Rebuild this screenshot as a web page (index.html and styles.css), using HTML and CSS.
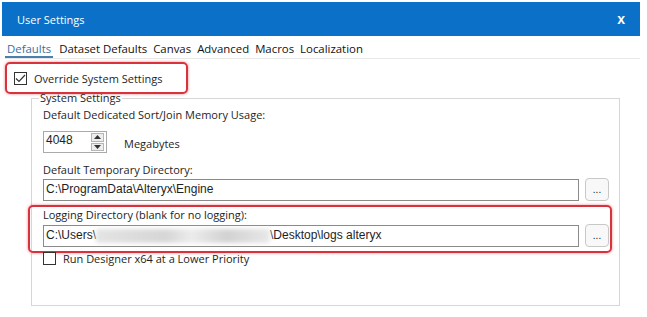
FILE: index.html
```html
<!DOCTYPE html>
<html lang="en">
<head>
  <meta charset="UTF-8" />
  <title>User Settings</title>
  <link rel="stylesheet" href="styles.css">
</head>
<body>
  <div class="dialog">
    <header class="titlebar">
      <span class="title">User Settings</span>
      <span class="close">x</span>
    </header>
    <nav class="tabs">
      <span class="tab active">Defaults</span>
      <span class="tab">Dataset Defaults</span>
      <span class="tab">Canvas</span>
      <span class="tab">Advanced</span>
      <span class="tab">Macros</span>
      <span class="tab">Localization</span>
    </nav>
    <div class="content">
      <!-- highlighted override checkbox -->
      <div class="highlight override">
        <label class="check">
          <span class="box checked">
            <svg width="11" height="9" viewBox="0 0 11 9"><path d="M1 4.5 L4 7.5 L10 1" fill="none" stroke="#333" stroke-width="1.2"/></svg>
          </span>
          Override System Settings
        </label>
      </div>
      <fieldset class="group">
        <legend>System Settings</legend>
        <div class="field-label">Default Dedicated Sort/Join Memory Usage:</div>
        <div class="number-row">
          <div class="spin">
            <span class="spin-value">4048</span>
            <span class="spin-buttons">
              <span class="spin-btn"><svg width="7" height="4" viewBox="0 0 7 4"><path d="M0 4 L3.5 0 L7 4Z" fill="#333"/></svg></span>
              <span class="spin-btn"><svg width="7" height="4" viewBox="0 0 7 4"><path d="M0 0 L3.5 4 L7 0Z" fill="#333"/></svg></span>
            </span>
          </div>
          <span class="unit">Megabytes</span>
        </div>
        <div class="field-label temp">Default Temporary Directory:</div>
        <div class="path-row">
          <div class="path-input">C:\ProgramData\Alteryx\Engine</div>
          <button class="browse">...</button>
        </div>
        <!-- highlighted logging directory -->
        <div class="highlight logging">
          <div class="field-label">Logging Directory (blank for no logging):</div>
          <div class="path-row">
            <div class="path-input">C:\Users\<span class="blur"></span>\Desktop\logs alteryx</div>
            <button class="browse">...</button>
          </div>
        </div>
        <label class="check low">
          <span class="box"></span>
          Run Designer x64 at a Lower Priority
        </label>
      </fieldset>
    </div>
  </div>
</body>
</html>
```

FILE: styles.css
```css
body {
  margin: 0;
  background-color: #fff;
  font-family: "Open Sans", "Noto Sans", sans-serif;
  font-size: 11px;
  color: #1e1e1e;
}
.dialog {
  width: 647px;
  height: 317px;
  background-color: #fff;
}
.titlebar {
  display: flex;
  align-items: center;
  justify-content: space-between;
  height: 34px;
  margin: 2px 7px 0 2px;
  padding: 0 15px 0 15px;
  background-color: #0b71c8;
  color: #fff;
}
.title {
  font-size: 11px;
}
.close {
  font-family: "Liberation Sans", Arial, sans-serif;
  font-weight: bold;
  font-size: 14px;
}
.tabs {
  display: flex;
  gap: 6px;
  margin: 5px 7px 0 5px;
  padding-left: 2px;
  border-bottom: 1px solid #e8e8e8;
  height: 17px;
  font-size: 11.4px;
}
.tab {
  line-height: 16px;
  color: #111;
}
.tab.active {
  color: #3a6f9c;
  border-bottom: 2px solid #4a7fae;
  margin-left: -2px;
  padding: 0 2px;
  height: 15px;
}
.content {
  position: relative;
}
.highlight {
  border: 2px solid #d8333c;
  border-radius: 5px;
  box-shadow: 0 0 3px rgba(216, 51, 60, 0.6);
}
.override {
  width: 179px;
  height: 28px;
  margin: 3px 0 0 5px;
  display: flex;
  align-items: center;
}
.check {
  display: flex;
  align-items: center;
  gap: 7px;
  font-size: 11px;
}
.override .check {
  margin-left: 7px;
}
.box {
  width: 11px;
  height: 11px;
  border: 1px solid #333;
  background-color: #fff;
  display: flex;
  align-items: center;
  justify-content: center;
}
.group {
  margin: -1px 27px 0 31px;
  padding: 0 0 0 11px;
  height: 213px;
  box-sizing: border-box;
  border: 1px solid #d6d6d6;
}
.group legend {
  padding: 0 1px;
  margin-left: -4px;
  line-height: 10px;
  font-size: 11px;
  color: #1e1e1e;
}
.field-label {
  font-size: 11px;
  margin-top: 4px;
  line-height: 16px;
}
.number-row {
  display: flex;
  align-items: center;
  margin-top: 8px;
  gap: 17px;
}
.spin {
  display: flex;
  justify-content: space-between;
  width: 64px;
  height: 22px;
  box-sizing: border-box;
  border: 1px solid #aaa;
  padding: 1px 2px 1px 2px;
}
.spin-value {
  font-family: "Liberation Sans", Arial, sans-serif;
  font-size: 12px;
  line-height: 14px;
}
.spin-buttons {
  display: flex;
  flex-direction: column;
  gap: 1px;
}
.spin-btn {
  width: 11px;
  height: 8px;
  border: 1px solid #b5b5b5;
  background-color: #eee;
  display: flex;
  align-items: center;
  justify-content: center;
}
.unit {
  font-size: 11px;
  margin-top: 3px;
}
.field-label.temp {
  margin-top: 9px;
}
.path-row {
  display: flex;
  align-items: center;
  gap: 6px;
}
.path-input {
  width: 536px;
  height: 22px;
  box-sizing: border-box;
  border: 1px solid #8a8a8a;
  padding: 0 2px;
  font-family: "Liberation Sans", Arial, sans-serif;
  font-size: 12px;
  line-height: 19px;
  display: flex;
  align-items: center;
  white-space: pre;
}
.blur {
  display: inline-block;
  width: 174px;
  height: 14px;
  background: linear-gradient(90deg, #e4e4e4, #d6d6d6 40%, #ececec 55%, #d2d2d2 75%, #e8e8e8);
  filter: blur(2px);
}
.browse {
  width: 24px;
  height: 23px;
  border: 1px solid #c8c8c8;
  border-radius: 4px;
  background-color: #f8f8f8;
  font-family: "Liberation Sans", Arial, sans-serif;
  font-size: 10px;
  color: #222;
  padding: 0;
}
.logging {
  margin: 4px 0 0 -15px;
  padding: 0 0 4px 13px;
  width: 567px;
}
.logging .field-label {
  margin-top: 0;
}
.logging .path-row {
  margin-top: 1px;
}
.check.low {
  margin-top: -2px;
  margin-left: 0;
}
```
